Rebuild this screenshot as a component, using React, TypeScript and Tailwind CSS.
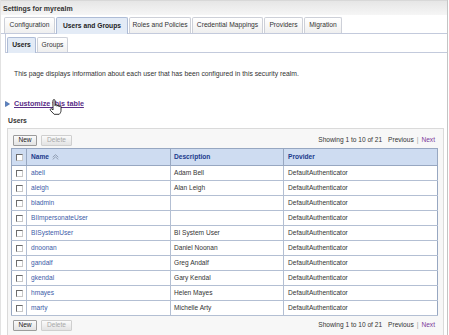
import React from "react";

const rows: [string, string][] = [
  ["abell", "Adam Bell"],
  ["aleigh", "Alan Leigh"],
  ["biadmin", ""],
  ["BIImpersonateUser", ""],
  ["BISystemUser", "BI System User"],
  ["dnoonan", "Daniel Noonan"],
  ["gandalf", "Greg Andalf"],
  ["gkendal", "Gary Kendal"],
  ["hmayes", "Helen Mayes"],
  ["marty", "Michelle Arty"],
];

function Check() {
  return (
    <span className="block w-[7px] h-[7px] bg-white border border-t-[#6b6b6b] border-l-[#6b6b6b] border-r-[#c8c8c8] border-b-[#c8c8c8]" />
  );
}

function Btn({ label, disabled, w }: { label: string; disabled?: boolean; w: string }) {
  return (
    <div
      className={
        "h-[11px] flex items-center justify-center rounded-[1px] border bg-gradient-to-b from-[#fbfbfb] to-[#e3e3e3] " +
        w +
        (disabled ? " border-[#cfcfcf] text-[#a8a8a8]" : " border-[#9c9c9c] text-[#222]")
      }
    >
      {label}
    </div>
  );
}

function Paging() {
  return (
    <div className="flex items-center mr-[5px] text-[#333]">
      <span>Showing 1 to 10 of 21</span>
      <span className="ml-[6px]">Previous</span>
      <span className="mx-[3px] text-[#999]">|</span>
      <span className="text-[#7a3a9a]">Next</span>
    </div>
  );
}

export default function App() {
  const tabs: [string, string, boolean][] = [
    ["Configuration", "w-[51px]", false],
    ["Users and Groups", "w-[72px]", true],
    ["Roles and Policies", "w-[62px]", false],
    ["Credential Mappings", "w-[71px]", false],
    ["Providers", "w-[39px]", false],
    ["Migration", "w-[38px]", false],
  ];
  return (
    <div className="w-[449px] h-[335px] overflow-hidden bg-white relative font-['Liberation_Sans',Arial,sans-serif] text-[6.6px] text-[#333] leading-none">
      <div className="w-[448px] h-full border-r border-[#c4c4c4] border-l border-l-[#e2e2e2] flex flex-col">
        {/* header */}
        <div className="h-[15px] shrink-0 flex items-center pl-[2px] bg-gradient-to-b from-[#e6e6e6] to-[#f6f6f6] border-t border-[#d8d8d8] font-bold text-[7px] text-[#333]">
          Settings for myrealm
        </div>
        {/* tabs */}
        <div className="mt-[2px] h-[17px] shrink-0 flex items-end pl-[3px] gap-[1px] border-b border-[#c3cadc]">
          {tabs.map(([t, w, sel]) => (
            <div
              key={t}
              className={
                "h-[16px] flex items-center justify-center rounded-t-[2px] border border-b-0 text-[6.7px] " +
                w +
                (sel
                  ? " font-bold bg-[#e3ebf6] border-[#aebcd6] text-[#222] h-[17px] -mb-[1px]"
                  : " bg-gradient-to-b from-[#ffffff] to-[#efefef] border-[#cdd0d8] text-[#333]")
              }
            >
              {t}
            </div>
          ))}
        </div>
        {/* sub tabs */}
        <div className="ml-[4px] h-[19px] shrink-0 flex items-end pl-[1px] gap-[1px] border-l border-b border-[#c3cadc]">
          <div className="w-[29px] h-[16px] -mb-[1px] flex items-center justify-center rounded-t-[2px] border border-b-0 border-[#aebcd6] bg-[#e3ebf6] font-bold text-[6.7px] text-[#222]">
            Users
          </div>
          <div className="w-[31px] h-[15px] flex items-center justify-center rounded-t-[2px] border border-b-0 border-[#cdd0d8] bg-gradient-to-b from-[#ffffff] to-[#efefef] text-[6.7px]">
            Groups
          </div>
        </div>
        {/* description */}
        <p className="mt-[16px] ml-[13px] leading-[9px] text-[6.8px]">
          This page displays information about each user that has been configured in this security realm.
        </p>
        {/* customize */}
        <div className="mt-[21px] ml-[4px] h-[9px] flex items-center">
          <svg width="5" height="6" viewBox="0 0 5 6" className="mr-[4px]">
            <path d="M0.5 0.5 L4.5 3 L0.5 5.5 Z" fill="#5d86c6" stroke="#2f5597" strokeWidth="0.6" />
          </svg>
          <span className="font-bold text-[7.2px] text-[#5a2d87] underline">Customize this table</span>
        </div>
        {/* users label */}
        <div className="mt-[9px] ml-[7px] h-[9px] flex items-center font-bold text-[6.8px] text-[#333]">
          Users
        </div>
        {/* section */}
        <div className="mt-[2px] ml-[6px] w-[437px] flex-1 border-t border-l border-r border-[#dadada] bg-[#f7f7f7] px-[3px] pt-[5px]">
          <div className="h-[12px] flex items-center justify-between">
            <div className="flex items-center gap-[4px] ml-[2px]">
              <Btn label="New" w="w-[24px]" />
              <Btn label="Delete" disabled w="w-[31px]" />
            </div>
            <Paging />
          </div>
          <table className="mt-[2px] w-[426px] border-collapse border border-[#97a7c1] bg-white table-fixed">
            <colgroup>
              <col className="w-[15px]" />
              <col className="w-[144px]" />
              <col className="w-[113px]" />
              <col className="w-[154px]" />
            </colgroup>
            <thead>
              <tr className="h-[17px] bg-[#cedcf1]">
                <th className="border-r border-b border-[#97a7c1] p-0">
                  <div className="flex justify-center">
                    <Check />
                  </div>
                </th>
                <th className="border-r border-b border-[#97a7c1] text-left pl-[4px] font-bold text-[#1b3a8c]">
                  <div className="flex items-center">
                    <span>Name</span>
                    <svg width="7" height="6" viewBox="0 0 7 6" className="ml-[3px]">
                      <path d="M0.7 3.2 L3.5 0.7 L6.3 3.2 M0.7 5.4 L3.5 2.9 L6.3 5.4" fill="none" stroke="#8a97ad" strokeWidth="0.9" />
                    </svg>
                  </div>
                </th>
                <th className="border-r border-b border-[#97a7c1] text-left pl-[3px] font-bold text-[#1b3a8c]">
                  Description
                </th>
                <th className="border-b border-[#97a7c1] text-left pl-[4px] font-bold text-[#1b3a8c]">
                  Provider
                </th>
              </tr>
            </thead>
            <tbody>
              {rows.map(([n, d]) => (
                <tr key={n} className="h-[15px]">
                  <td className="border-r border-b border-[#b3bfd3] p-0">
                    <div className="flex justify-center">
                      <Check />
                    </div>
                  </td>
                  <td className="border-r border-b border-[#b3bfd3] pl-[4px] text-[#3b5ca8]">{n}</td>
                  <td className="border-r border-b border-[#b3bfd3] pl-[3px] text-[#333]">{d}</td>
                  <td className="border-b border-[#b3bfd3] pl-[4px] text-[#333]">DefaultAuthenticator</td>
                </tr>
              ))}
            </tbody>
          </table>
          <div className="mt-[3px] h-[12px] flex items-center justify-between">
            <div className="flex items-center gap-[4px] ml-[2px]">
              <Btn label="New" w="w-[24px]" />
              <Btn label="Delete" disabled w="w-[31px]" />
            </div>
            <Paging />
          </div>
        </div>
      </div>
      {/* hand cursor */}
      <svg width="13" height="16" viewBox="0 0 13 16" className="absolute left-[49px] top-[99px]">
        <path
          d="M4 1.6a1 1 0 0 1 2 0V6.6a1 1 0 0 1 2 0V7.2a1 1 0 0 1 2 0V7.8a1 1 0 0 1 2 0V11.5c0 1.6-0.8 2.8-1.8 3.8H5.2L1.6 11.6c-0.6-0.7-0.5-1.5 0.2-1.8 0.5-0.2 1 0 1.4 0.4L4 11Z"
          fill="#fff"
          stroke="#000"
          strokeWidth="0.8"
          strokeLinejoin="round"
        />
      </svg>
    </div>
  );
}
